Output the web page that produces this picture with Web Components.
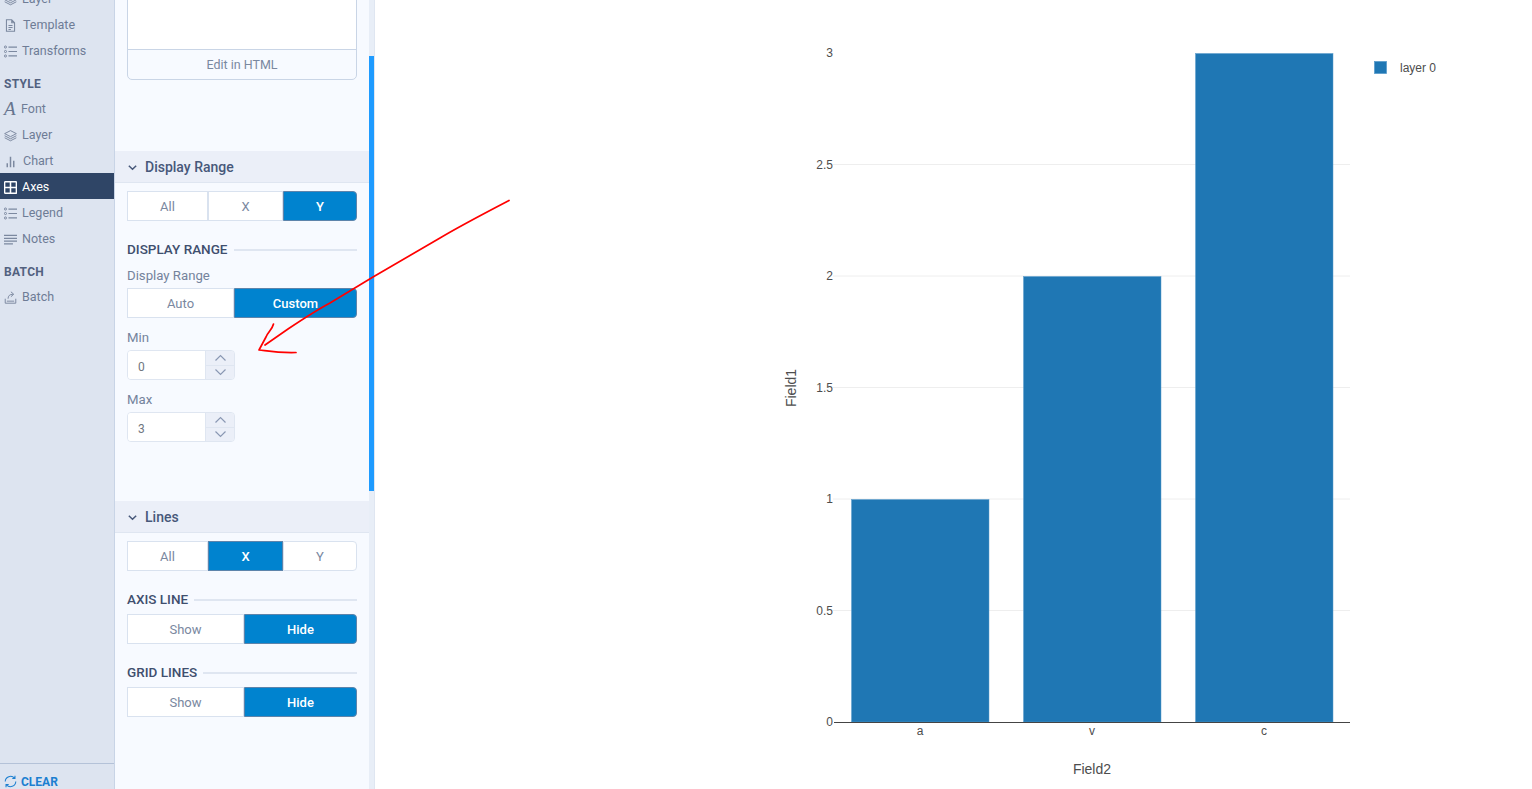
<!DOCTYPE html>
<html lang="en">
<head>
<meta charset="utf-8">
<title>Chart editor</title>
<style>
  html, body { margin: 0; height: 100%; overflow: hidden; background: #fff; }
  body { font-family: Roboto, "Liberation Sans", sans-serif; }
</style>
</head>
<body>
<editor-app>
  <side-nav slot="nav">
    <nav-item icon="layer">Layer</nav-item>
    <nav-item icon="template" indent="19">Template</nav-item>
    <nav-item icon="list">Transforms</nav-item>
    <nav-heading>STYLE</nav-heading>
    <nav-item icon="font" indent="17">Font</nav-item>
    <nav-item icon="layer">Layer</nav-item>
    <nav-item icon="chart" indent="19">Chart</nav-item>
    <nav-item icon="axes" active>Axes</nav-item>
    <nav-item icon="list">Legend</nav-item>
    <nav-item icon="notes">Notes</nav-item>
    <nav-heading>BATCH</nav-heading>
    <nav-item icon="batch">Batch</nav-item>
  </side-nav>

  <settings-panel slot="panel">
    <html-box></html-box>

    <fold-section title="Display Range" gap="71">
      <seg-toggle options="All,X,Y" widths="81,75,74" active="2"></seg-toggle>
      <rule-label top="20">DISPLAY RANGE</rule-label>
      <field-label top="9">Display Range</field-label>
      <seg-toggle options="Auto,Custom" widths="107,123" active="1" top="4"></seg-toggle>
      <field-label top="12">Min</field-label>
      <num-input value="0" top="4"></num-input>
      <field-label top="12">Max</field-label>
      <num-input value="3" top="4"></num-input>
    </fold-section>

    <fold-section title="Lines" gap="59">
      <seg-toggle options="All,X,Y" widths="81,75,74" active="1"></seg-toggle>
      <rule-label top="20">AXIS LINE</rule-label>
      <seg-toggle options="Show,Hide" widths="117,113" active="1" top="5"></seg-toggle>
      <rule-label top="20">GRID LINES</rule-label>
      <seg-toggle options="Show,Hide" widths="117,113" active="1" top="5"></seg-toggle>
    </fold-section>
  </settings-panel>

  <bar-chart slot="main"></bar-chart>
  <ink-arrow slot="overlay"></ink-arrow>
</editor-app>

<script>
const ICONS = {
  layer: `<path d="M8 2 .8 5.700 8 9.400l7.200-3.700zM.8 8.300 8 12l7.200-3.700M.8 10.800 8 14.500l7.200-3.700" fill="none" stroke="currentColor" stroke-width="1.200"/>`,
  template: `<path d="M3 1h6.500L13 4.500V15H3zM9.500 1v3.500H13M5.500 8h5M5.500 10.500h5M5.500 13h3" fill="none" stroke="currentColor" stroke-width="1.300"/>`,
  list: `<path d="M5.500 2.500H16M5.500 8H16M5.500 13.500H16" stroke="currentColor" stroke-width="1.500"/><g fill="none" stroke="currentColor" stroke-width="1.200"><circle cx="1.800" cy="2.500" r="1.300"/><circle cx="1.800" cy="8" r="1.300"/><circle cx="1.800" cy="13.500" r="1.300"/></g>`,
  chart: `<path d="M4 10v5M8 2v13M12 7v8" stroke="currentColor" stroke-width="1.800"/>`,
  axes: `<path d="M1.500 1h13a.8.8 0 0 1 .8.8v12.400a.8.8 0 0 1-.8.8h-13a.8.8 0 0 1-.8-.8V1.800a.8.8 0 0 1 .8-.8zM8 1v14M.7 8h14.600" fill="none" stroke="currentColor" stroke-width="1.900"/>`,
  notes: `<path d="M0 3h16M0 6.500h16M0 10h16M0 13.500h11" stroke="currentColor" stroke-width="1.500"/>`,
  batch: `<path d="M1.500 9.500v5.500h13V9.500M3.500 12.500h9M5 9.500C5 6 7 4 11 4M8.500 1l3.500 3-3.500 3" fill="none" stroke="currentColor" stroke-width="1.200"/>`
};

class EditorApp extends HTMLElement {
  constructor() {
    super();
    this.attachShadow({ mode: "open" });
    this.shadowRoot.innerHTML = `
      <style>
        :host { display: flex; height: 100vh; position: relative; overflow: hidden; }
        .main { flex: 1; min-width: 0; background: #fff; }
        .over { position: absolute; inset: 0; pointer-events: none; }
      </style>
      <slot name="nav"></slot>
      <slot name="panel"></slot>
      <div class="main"><slot name="main"></slot></div>
      <div class="over"><slot name="overlay"></slot></div>
    `;
  }
}

class SideNav extends HTMLElement {
  constructor() {
    super();
    this.attachShadow({ mode: "open" });
    this.shadowRoot.innerHTML = `
      <style>
        :host {
          display: flex; flex-direction: column; flex: none;
          width: 114px; height: 100%;
          background: #dde4f0; border-right: 1px solid #c8d4e6;
          overflow: hidden;
        }
        .list { flex: 1; margin-top: -15px; }
        .clear {
          flex: none; height: 26px; box-sizing: border-box;
          border-top: 1px solid #b4c2d8; padding: 10px 0 0 4px;
          display: flex; align-items: center; gap: 4px;
          color: #1c7fd0; font: 700 12px/14px Roboto, "Liberation Sans", sans-serif;
        }
        svg { width: 13px; height: 13px; flex: none; }
      </style>
      <div class="list"><slot></slot></div>
      <div class="clear">
        <svg viewBox="0 0 16 16" fill="none" stroke="currentColor" stroke-width="1.300">
          <path d="M1.500 8a6.500 6.500 0 0 1 11.500-4M14.500 8A6.500 6.500 0 0 1 3 12M13.500 1v3.300h-3.300M2.500 15v-3.300h3.300"/>
        </svg>
        <span>CLEAR</span>
      </div>
    `;
  }
}

class NavItem extends HTMLElement {
  constructor() {
    super();
    this.attachShadow({ mode: "open" });
  }
  connectedCallback() {
    const name = this.getAttribute("icon");
    const indent = this.getAttribute("indent") || 18;
    const glyph = name === "font"
      ? `<span class="serif">A</span>`
      : `<svg viewBox="0 0 16 16">${ICONS[name]}</svg>`;
    this.shadowRoot.innerHTML = `
      <style>
        :host {
          display: flex; align-items: center; height: 24px;
          padding: 2px 0 0 4px; color: #6e7c96;
          font: 400 12.500px/24px Roboto, "Liberation Sans", sans-serif;
        }
        :host([active]) { background: #2f4566; color: #fff; }
        .ico { width: ${indent}px; flex: none; display: flex; align-items: center; color: #7b889f; }
        :host([active]) .ico { color: #fff; }
        svg { width: 13px; height: 13px; display: block; }
        .serif { font: italic 400 19px/24px "Liberation Serif", serif; color: #66748e; }
      </style>
      <span class="ico">${glyph}</span><slot></slot>
    `;
  }
}

class NavHeading extends HTMLElement {
  constructor() {
    super();
    this.attachShadow({ mode: "open" });
    this.shadowRoot.innerHTML = `
      <style>
        :host {
          display: block; padding: 11px 0 0 4px; height: 20px; margin-bottom: 1px;
          color: #52617f; font: 700 12px/20px Roboto, "Liberation Sans", sans-serif;
          letter-spacing: .3px;
        }
      </style>
      <slot></slot>
    `;
  }
}

class SettingsPanel extends HTMLElement {
  constructor() {
    super();
    this.attachShadow({ mode: "open" });
    this.shadowRoot.innerHTML = `
      <style>
        :host {
          display: flex; flex: none; width: 260px; height: 100%;
          background: #f7faff; overflow: hidden;
        }
        .content { flex: 1; min-width: 0; }
        .track { flex: none; width: 5px; background: #e8eef7; padding-top: 56px; box-sizing: border-box; }
        .thumb { height: 435px; background: #1e9bff; }
        .edge { flex: none; width: 1px; background: #dfe6f1; }
      </style>
      <div class="content"><slot></slot></div>
      <div class="track"><div class="thumb"></div></div>
      <div class="edge"></div>
    `;
  }
}

class HtmlBox extends HTMLElement {
  constructor() {
    super();
    this.attachShadow({ mode: "open" });
    this.shadowRoot.innerHTML = `
      <style>
        :host {
          display: block; margin: -10px 12px 0; height: 90px; box-sizing: border-box;
          border: 1px solid #c9d5e6; border-radius: 0 0 5px 5px;
          background: #f7faff; overflow: hidden;
        }
        .area { height: 58px; background: #fff; border-bottom: 1px solid #c9d5e6; }
        .btn {
          height: 30px; text-align: center; color: #7a889f;
          font: 400 12.500px/29px Roboto, "Liberation Sans", sans-serif;
        }
      </style>
      <div class="area"></div>
      <div class="btn">Edit in HTML</div>
    `;
  }
}

class FoldSection extends HTMLElement {
  constructor() {
    super();
    this.attachShadow({ mode: "open" });
  }
  connectedCallback() {
    this.shadowRoot.innerHTML = `
      <style>
        :host { display: block; margin-top: ${this.getAttribute("gap") || 0}px; }
        .head {
          display: flex; align-items: center; gap: 7px;
          height: 30px; padding: 1px 0 0 12px;
          background: #ebeff8; border-bottom: 1px solid #dfe6f1;
          color: #47587a; font: 500 14px/30px Roboto, "Liberation Sans", sans-serif;
        }
        svg { width: 11px; height: 11px; flex: none; }
        .body { padding: 8px 12px 0; }
      </style>
      <div class="head">
        <svg viewBox="0 0 12 12" fill="none" stroke="currentColor" stroke-width="1.600"><path d="M2 4l4 4 4-4"/></svg>
        <span>${this.getAttribute("title")}</span>
      </div>
      <div class="body"><slot></slot></div>
    `;
  }
}

class SegToggle extends HTMLElement {
  constructor() {
    super();
    this.attachShadow({ mode: "open" });
  }
  connectedCallback() {
    const opts = this.getAttribute("options").split(",");
    const widths = this.getAttribute("widths").split(",").map(w => w + "px").join(" ");
    const active = Number(this.getAttribute("active"));
    const btns = opts.map((o, i) => `<div class="b${i === active ? " on" : ""}">${o}</div>`).join("");
    this.shadowRoot.innerHTML = `
      <style>
        :host {
          display: grid; grid-template-columns: ${widths}; grid-template-rows: 30px; height: 30px;
          margin-top: ${this.getAttribute("top") || 0}px;
          font: 400 13px/30px Roboto, "Liberation Sans", sans-serif;
        }
        .b {
          box-sizing: border-box; height: 30px; overflow: hidden;
          text-align: center; background: #fff; color: #7a889f;
          border: 1px solid #d9e2ef;
        }
        .b:first-child { border-radius: 4px 0 0 4px; }
        .b:last-child { border-radius: 0 4px 4px 0; }
        .b.on {
          background: #0083cf; color: #fff; font-weight: 500;
          border-color: #5d84ab;
        }
      </style>
      ${btns}
    `;
  }
}

class RuleLabel extends HTMLElement {
  constructor() {
    super();
    this.attachShadow({ mode: "open" });
  }
  connectedCallback() {
    this.shadowRoot.innerHTML = `
      <style>
        :host {
          display: flex; align-items: center; gap: 6px; height: 18px;
          margin-top: ${this.getAttribute("top") || 0}px;
          color: #3f4f6e; font: 500 13.500px/16px Roboto, "Liberation Sans", sans-serif;
          white-space: nowrap;
        }
        span { margin-bottom: 2px; }
        i { flex: 1; height: 2px; background: #dfe6f1; }
      </style>
      <span><slot></slot></span><i></i>
    `;
  }
}

class FieldLabel extends HTMLElement {
  constructor() {
    super();
    this.attachShadow({ mode: "open" });
  }
  connectedCallback() {
    this.shadowRoot.innerHTML = `
      <style>
        :host {
          display: block; height: 16px;
          margin-top: ${this.getAttribute("top") || 0}px;
          color: #74839c; font: 400 13.200px/16px Roboto, "Liberation Sans", sans-serif;
        }
      </style>
      <slot></slot>
    `;
  }
}

class NumInput extends HTMLElement {
  constructor() {
    super();
    this.attachShadow({ mode: "open" });
  }
  connectedCallback() {
    this.shadowRoot.innerHTML = `
      <style>
        :host {
          display: flex; width: 108px; height: 30px; box-sizing: border-box;
          margin-top: ${this.getAttribute("top") || 0}px;
          border: 1px solid #dfe6f1; border-radius: 4px; overflow: hidden;
        }
        .val {
          flex: 1; background: #fff; padding-left: 10px; color: #6f7680;
          font: 400 12px/32px Roboto, "Liberation Sans", sans-serif;
        }
        .spin { width: 28px; flex: none; display: flex; flex-direction: column; background: #ebeff8; border-left: 1px solid #dfe6f1; }
        .spin div { flex: 1; display: flex; align-items: center; justify-content: center; color: #8a98b3; }
        .spin div + div { border-top: 1px solid #dfe6f1; }
        svg { width: 13px; height: 8px; }
      </style>
      <div class="val">${this.getAttribute("value")}</div>
      <div class="spin">
        <div><svg viewBox="0 0 12 8" fill="none" stroke="currentColor" stroke-width="1.200"><path d="M1 6.500 6 1.500l5 5"/></svg></div>
        <div><svg viewBox="0 0 12 8" fill="none" stroke="currentColor" stroke-width="1.200"><path d="M1 1.500l5 5 5-5"/></svg></div>
      </div>
    `;
  }
}

class BarChart extends HTMLElement {
  constructor() {
    super();
    this.attachShadow({ mode: "open" });
  }
  connectedCallback() {
    const y0 = 722, unit = 223;
    const ticks = ["0", "0.5", "1", "1.5", "2", "2.5", "3"];
    const bars = [["a", 851, 1], ["v", 1023, 2], ["c", 1195, 3]];
    const grid = ticks.slice(1, 6).map((t, i) => {
      const y = y0 - (i + 1) * unit / 2;
      return `<line x1="833" x2="1350" y1="${y}" y2="${y}" stroke="#eee"/>`;
    }).join("");
    const yLabels = ticks.map((t, i) =>
      `<text x="833" y="${y0 - i * unit / 2 + 4}" text-anchor="end">${t}</text>`).join("");
    const rects = bars.map(([n, x, v]) =>
      `<rect x="${x + .5}" y="${y0 - v * unit + .5}" width="137.500" height="${v * unit - .5}" fill="#1f77b4" stroke="#5b9ccb" stroke-width=".5"/>
       <text x="${x + 69}" y="735" text-anchor="middle">${n}</text>`).join("");
    this.shadowRoot.innerHTML = `
      <style>
        :host { display: block; height: 100%; }
        svg { display: block; width: 100%; height: 100%; }
        text { font: 12px "Liberation Sans", Arial, sans-serif; fill: #4d4d4d; }
        .title { font-size: 14px; }
      </style>
      <svg viewBox="375 0 1157 789">
        ${grid}
        ${rects}
        <line x1="834" x2="1350" y1="722.500" y2="722.500" stroke="#444"/>
        ${yLabels}
        <text class="title" x="1092" y="774" text-anchor="middle">Field2</text>
        <text class="title" text-anchor="middle" transform="translate(796 388) rotate(-90)">Field1</text>
        <rect x="1374.500" y="61.500" width="12" height="12" fill="#1f77b4" stroke="#5b9ccb" stroke-width=".8"/>
        <text x="1400" y="72">layer 0</text>
      </svg>
    `;
  }
}

class InkArrow extends HTMLElement {
  constructor() {
    super();
    this.attachShadow({ mode: "open" });
    this.shadowRoot.innerHTML = `
      <style>
        :host { display: block; width: 100%; height: 100%; }
        svg { display: block; width: 100%; height: 100%; }
      </style>
      <svg viewBox="0 0 1532 789" fill="none" stroke="#f00" stroke-width="1.700" stroke-linecap="round" stroke-linejoin="round">
        <path d="M509 200.500C485 213 460 226 440 238L373 277 330 303C315 311 300 321 288 329L265 345"/>
        <path d="M273.500 324C272 330 268 332 266 337L259 350C268 351 277 353 296 352.500"/>
      </svg>
    `;
  }
}

customElements.define("editor-app", EditorApp);
customElements.define("side-nav", SideNav);
customElements.define("nav-item", NavItem);
customElements.define("nav-heading", NavHeading);
customElements.define("settings-panel", SettingsPanel);
customElements.define("html-box", HtmlBox);
customElements.define("fold-section", FoldSection);
customElements.define("seg-toggle", SegToggle);
customElements.define("rule-label", RuleLabel);
customElements.define("field-label", FieldLabel);
customElements.define("num-input", NumInput);
customElements.define("bar-chart", BarChart);
customElements.define("ink-arrow", InkArrow);
</script>
</body>
</html>
